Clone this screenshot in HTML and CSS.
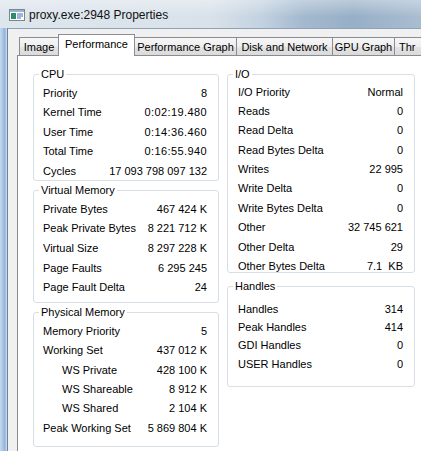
FILE: index.html
```html
<!DOCTYPE html>
<html>
<head>
<meta charset="utf-8">
<link rel="stylesheet" href="styles.css">
</head>
<body>
<div class="window">
  <div class="titlebar">
    <svg class="appicon" width="16" height="12" viewBox="0 0 16 12">
      <rect x="0.5" y="0.5" width="15" height="11" fill="#ffffff" stroke="#7c8590"/>
      <rect x="1" y="1" width="14" height="2" fill="#9ab4cf"/>
      <rect x="2" y="4" width="5" height="6" fill="#2f8a6c"/>
      <rect x="8" y="4.5" width="6" height="1" fill="#3c6fb0"/>
      <rect x="8" y="6.5" width="6" height="1" fill="#3c6fb0"/>
      <rect x="8" y="8.5" width="4" height="1" fill="#3c6fb0"/>
    </svg>
    <span class="title">proxy.exe:2948 Properties</span>
  </div>
  <div class="body">
    <div class="frame-left"></div>
    <div class="client">
      <div class="tabs">
        <div class="tab t-image">Image</div>
        <div class="tab active t-perf">Performance</div>
        <div class="tab t-pg">Performance Graph</div>
        <div class="tab t-dn">Disk and Network</div>
        <div class="tab t-gpu">GPU Graph</div>
        <div class="tab t-thr">Thr</div>
      </div>
      <div class="page">
        <div class="col left">
          <fieldset class="group cpu">
            <legend>CPU</legend>
            <div class="row"><span>Priority</span><span>8</span></div>
            <div class="row"><span>Kernel Time</span><span class="time">0:02:19.480</span></div>
            <div class="row"><span>User Time</span><span class="time">0:14:36.460</span></div>
            <div class="row"><span>Total Time</span><span class="time">0:16:55.940</span></div>
            <div class="row"><span>Cycles</span><span>17 093 798 097 132</span></div>
          </fieldset>
          <fieldset class="group vm">
            <legend>Virtual Memory</legend>
            <div class="row"><span>Private Bytes</span><span>467 424 K</span></div>
            <div class="row"><span>Peak Private Bytes</span><span>8 221 712 K</span></div>
            <div class="row"><span>Virtual Size</span><span>8 297 228 K</span></div>
            <div class="row"><span>Page Faults</span><span>6 295 245</span></div>
            <div class="row"><span>Page Fault Delta</span><span>24</span></div>
          </fieldset>
          <fieldset class="group pm">
            <legend>Physical Memory</legend>
            <div class="row"><span>Memory Priority</span><span>5</span></div>
            <div class="row"><span>Working Set</span><span>437 012 K</span></div>
            <div class="row sub"><span>WS Private</span><span>428 100 K</span></div>
            <div class="row sub"><span>WS Shareable</span><span>8 912 K</span></div>
            <div class="row sub"><span>WS Shared</span><span>2 104 K</span></div>
            <div class="row"><span>Peak Working Set</span><span>5 869 804 K</span></div>
          </fieldset>
        </div>
        <div class="col right">
          <fieldset class="group io">
            <legend>I/O</legend>
            <div class="row"><span>I/O Priority</span><span>Normal</span></div>
            <div class="row"><span>Reads</span><span>0</span></div>
            <div class="row"><span>Read Delta</span><span>0</span></div>
            <div class="row"><span>Read Bytes Delta</span><span>0</span></div>
            <div class="row"><span>Writes</span><span>22 995</span></div>
            <div class="row"><span>Write Delta</span><span>0</span></div>
            <div class="row"><span>Write Bytes Delta</span><span>0</span></div>
            <div class="row"><span>Other</span><span>32 745 621</span></div>
            <div class="row"><span>Other Delta</span><span>29</span></div>
            <div class="row"><span>Other Bytes Delta</span><span>7.1&nbsp; KB</span></div>
          </fieldset>
          <fieldset class="group hd">
            <legend>Handles</legend>
            <div class="row"><span>Handles</span><span>314</span></div>
            <div class="row"><span>Peak Handles</span><span>414</span></div>
            <div class="row"><span>GDI Handles</span><span>0</span></div>
            <div class="row"><span>USER Handles</span><span>0</span></div>
          </fieldset>
        </div>
      </div>
    </div>
  </div>
</div>
</body>
</html>
```

FILE: styles.css
```css
html, body {
  margin: 0;
  padding: 0;
}
body {
  width: 421px;
  height: 451px;
  overflow: hidden;
  font-family: "Liberation Sans", Arial, sans-serif;
  color: #000;
  background: #f0f0f0;
}
.window {
  width: 421px;
  height: 451px;
  display: flex;
  flex-direction: column;
}
.titlebar {
  height: 28px;
  flex: none;
  display: flex;
  align-items: center;
  gap: 4px;
  padding-left: 9px;
  box-sizing: border-box;
  background:
    linear-gradient(180deg, rgba(255,255,255,0.35) 0%, rgba(255,255,255,0) 60%),
    linear-gradient(90deg, #dde5ed 0%, #d9e2ea 50%, #c3d2e0 62%, #a3b9ce 72%, #97afc7 84%, #a9bdd1 100%);
}
.appicon {
  display: block;
  margin-top: 1px;
}
.title {
  font-size: 12px;
  line-height: 14px;
  color: #111;
  margin-top: 2px;
}
.body {
  flex: 1;
  display: flex;
  min-height: 0;
}
.frame-left {
  width: 7px;
  flex: none;
  background: linear-gradient(90deg, #c7d9ec 0%, #a7c3e3 45%, #8fb2da 70%, #d6e4f2 100%);
  border-right: 1px solid #6f8195;
}
.client {
  flex: 1;
  display: flex;
  flex-direction: column;
  padding: 5px 0 0 9px;
  border-top: 1px solid #8fa2b5;
  background: #f0f0f0;
  min-width: 0;
}
.tabs {
  height: 21px;
  flex: none;
  display: flex;
  align-items: flex-end;
  padding-left: 3px;
  white-space: nowrap;
}
.tab {
  height: 18px;
  box-sizing: border-box;
  border: 1px solid #898c95;
  border-bottom: none;
  margin-left: -1px;
  font-size: 11px;
  line-height: 18px;
  text-align: center;
  color: #000;
  background: linear-gradient(180deg, #f6f6f6 0%, #eeeeee 50%, #e4e4e4 51%, #dadada 100%);
  flex: none;
  overflow: hidden;
}
.tab.active {
  height: 22px;
  margin-bottom: -1px;
  position: relative;
  z-index: 1;
  background: #ffffff;
  line-height: 19px;
}
.t-image { width: 40px; }
.t-perf { width: 77px; }
.t-pg { width: 103px; }
.t-dn { width: 97px; }
.t-gpu { width: 63px; }
.t-thr { width: 30px; text-align: left; padding-left: 4px; }

.page {
  flex: 1;
  background: #ffffff;
  border-left: 1px solid #898c95;
  border-top: 1px solid #898c95;
  padding: 11.5px 0 0 15px;
  display: flex;
  gap: 8px;
  align-items: flex-start;
}
.col {
  display: flex;
  flex-direction: column;
}
.col.left { width: 186px; }
.col.right { width: 188px; }

.group {
  margin: 0;
  padding: 0;
  border: 1px solid #d5dfe5;
  border-radius: 3px;
  min-width: 0;
  display: flex;
  flex-direction: column;
}
.group legend {
  font-size: 11px;
  line-height: 13px;
  padding: 0 2px;
  margin-left: 5px;
}
.row {
  display: flex;
  justify-content: space-between;
  font-size: 11px;
  line-height: 12px;
  height: 12px;
  padding: 0 11px 0 9px;
  white-space: nowrap;
}
.row.sub { padding-left: 28px; }
.time { letter-spacing: 0.4px; }

.cpu { padding: 6px 0 3px; gap: 7.6px; }
.vm { margin-top: 3.5px; padding: 5.5px 0 8.5px; gap: 7.55px; }
.pm { margin-top: 3.5px; padding: 6px 0 12px; gap: 7.3px; }
.io { padding: 5px 0 0; gap: 7.4px; }
.io .row { padding-left: 10px; }
.hd { margin-top: 7px; padding: 9.5px 0 16px; gap: 6.4px; }
.hd .row { padding-left: 10px; }
```
